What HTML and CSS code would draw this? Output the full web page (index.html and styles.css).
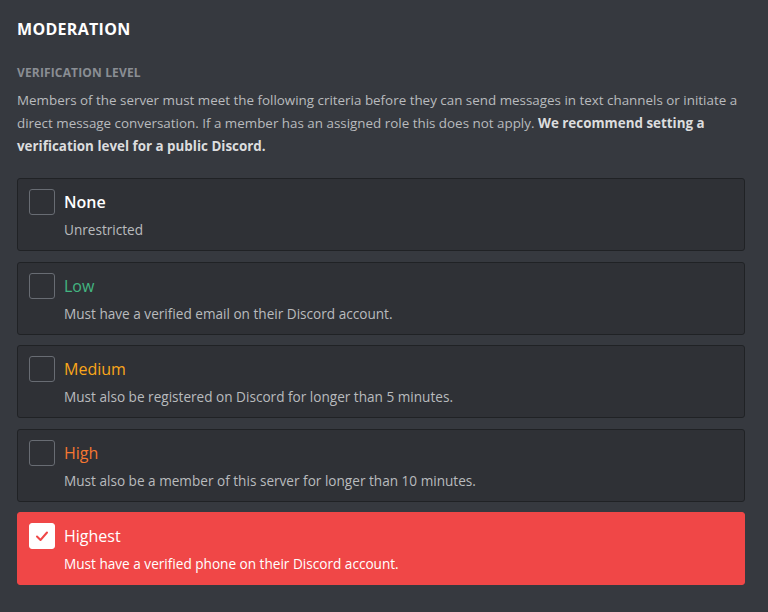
FILE: index.html
```html
<!DOCTYPE html>
<html>
<head>
<meta charset="utf-8">
<link rel="stylesheet" href="styles.css">
</head>
<body>
<div class="page">
  <h1 class="title">MODERATION</h1>
  <h2 class="label">VERIFICATION LEVEL</h2>
  <p class="desc">Members of the server must meet the following criteria before they can send messages in text channels or initiate a direct message conversation. If a member has an assigned role this does not apply. <strong>We recommend setting a verification level for a public Discord.</strong></p>
  <div class="options">
    <div class="card">
      <div class="box"></div>
      <div class="text">
        <div class="name name-none">None</div>
        <div class="sub">Unrestricted</div>
      </div>
    </div>
    <div class="card">
      <div class="box"></div>
      <div class="text">
        <div class="name name-low">Low</div>
        <div class="sub">Must have a verified email on their Discord account.</div>
      </div>
    </div>
    <div class="card">
      <div class="box"></div>
      <div class="text">
        <div class="name name-medium">Medium</div>
        <div class="sub">Must also be registered on Discord for longer than 5 minutes.</div>
      </div>
    </div>
    <div class="card">
      <div class="box"></div>
      <div class="text">
        <div class="name name-high">High</div>
        <div class="sub">Must also be a member of this server for longer than 10 minutes.</div>
      </div>
    </div>
    <div class="card card-selected">
      <div class="box box-checked">
        <svg width="18" height="18" viewBox="0 0 18 18"><path d="M4 9.5 L7.5 13 L14 5.5" fill="none" stroke="#f04747" stroke-width="2" stroke-linecap="round" stroke-linejoin="round"/></svg>
      </div>
      <div class="text">
        <div class="name name-highest">Highest</div>
        <div class="sub sub-selected">Must have a verified phone on their Discord account.</div>
      </div>
    </div>
  </div>
</div>
</body>
</html>
```

FILE: styles.css
```css
html, body {
  margin: 0;
  padding: 0;
  background: #36393f;
  height: 100%;
}
body {
  font-family: "Open Sans", "Noto Sans", sans-serif;
  color: #b9bbbe;
}
.page {
  width: 728px;
  padding: 17px 0 0 17px;
}
.title {
  margin: 0;
  font-size: 16px;
  line-height: 24px;
  font-weight: 700;
  color: #ffffff;
  letter-spacing: 0.3px;
}
.label {
  margin: 24px 0 0 0;
  font-size: 12px;
  line-height: 16px;
  font-weight: 700;
  color: #8a8e94;
  letter-spacing: 0.15px;
}
.desc {
  margin: 8px 0 0 0;
  font-size: 13.4px;
  line-height: 23px;
  color: #b9bbbe;
}
.desc strong {
  font-weight: 700;
  color: #dcddde;
}
.options {
  margin-top: 20px;
  display: flex;
  flex-direction: column;
  gap: 10.5px;
}
.card {
  display: flex;
  gap: 9px;
  height: 73px;
  box-sizing: border-box;
  padding: 10px 11px;
  background: #2f3136;
  border: 1px solid #202225;
  border-radius: 3px;
}
.card-selected {
  background: #f04747;
  border-color: #f04747;
}
.box {
  flex: none;
  width: 26px;
  height: 26px;
  box-sizing: border-box;
  border: 1px solid #686c73;
  border-radius: 3px;
  display: flex;
  align-items: center;
  justify-content: center;
}
.box-checked {
  background: #ffffff;
  border-color: #ffffff;
}
.text {
  display: flex;
  flex-direction: column;
  padding-top: 1px;
}
.name {
  font-size: 16px;
  line-height: 24px;
  font-weight: 500;
}
.name-none { color: #ffffff; font-weight: 600; }
.name-low { color: #43b581; }
.name-medium { color: #faa61a; }
.name-high { color: #f57731; }
.name-highest { color: #ffffff; }
.sub {
  margin-top: 6px;
  font-size: 13.6px;
  line-height: 20px;
  color: #b9bbbe;
}
.sub-selected {
  color: #ffffff;
}
```
